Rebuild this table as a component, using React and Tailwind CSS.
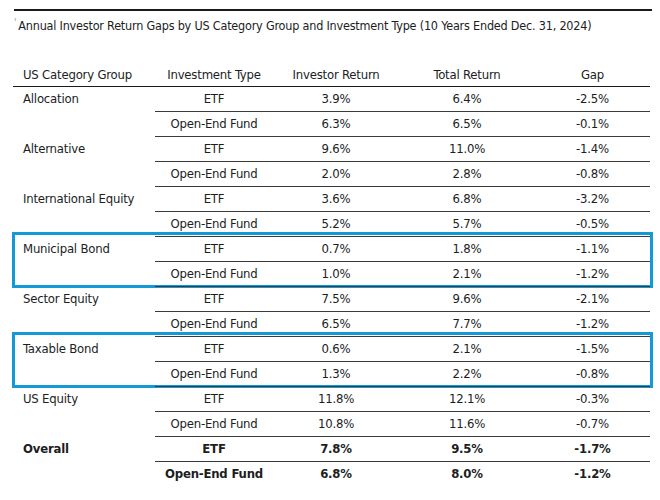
import React from 'react'

const groups = [
    { name: 'Allocation', rows: [['ETF', '3.9%', '6.4%', '-2.5%'], ['Open-End Fund', '6.3%', '6.5%', '-0.1%']] },
    { name: 'Alternative', rows: [['ETF', '9.6%', '11.0%', '-1.4%'], ['Open-End Fund', '2.0%', '2.8%', '-0.8%']] },
    { name: 'International Equity', rows: [['ETF', '3.6%', '6.8%', '-3.2%'], ['Open-End Fund', '5.2%', '5.7%', '-0.5%']] },
    { name: 'Municipal Bond', boxed: true, rows: [['ETF', '0.7%', '1.8%', '-1.1%'], ['Open-End Fund', '1.0%', '2.1%', '-1.2%']] },
    { name: 'Sector Equity', rows: [['ETF', '7.5%', '9.6%', '-2.1%'], ['Open-End Fund', '6.5%', '7.7%', '-1.2%']] },
    { name: 'Taxable Bond', boxed: true, rows: [['ETF', '0.6%', '2.1%', '-1.5%'], ['Open-End Fund', '1.3%', '2.2%', '-0.8%']] },
    { name: 'US Equity', rows: [['ETF', '11.8%', '12.1%', '-0.3%'], ['Open-End Fund', '10.8%', '11.6%', '-0.7%']] },
    { name: 'Overall', bold: true, rows: [['ETF', '7.8%', '9.5%', '-1.7%'], ['Open-End Fund', '6.8%', '8.0%', '-1.2%']] },
]

const Row = ({ label, cells, first, bold }) => {
    return (
        <div className={`flex ${first ? 'h-[24px]' : 'h-[25px]'} ${bold ? 'font-bold' : ''}`}>
            <div className={`w-[142px] pl-[10px] leading-[24px] whitespace-nowrap ${first ? '' : 'pt-px'}`}>{label}</div>
            <div className={`flex-1 grid grid-cols-[118px_126px_136px_115px] text-center ${first ? '' : 'border-t border-[#3a3a3a]'}`}>
                {cells.map((c, i) => (
                    <div key={i} className="leading-[24px] whitespace-nowrap">{c}</div>
                ))}
            </div>
        </div>
    )
}

const App = () => {
    let rowIndex = 0
    return (
        <div className="w-[660px] h-[500px] bg-white text-[#201d1e] text-[13px] tracking-[-0.2px] pt-[9px]" style={{ fontFamily: '"DejaVu Sans Condensed", "Liberation Sans", sans-serif' }}>
            <div className="ml-[14px] w-[638px] h-[2px] bg-[#1a1a1a]"></div>
            <div className="mt-[5px] ml-[14px] leading-[20px] text-[12.5px] flex items-start whitespace-nowrap">
                <span className="text-[10px] leading-[14px] text-[#9a9a9a] mr-[2px]">'</span>
                <span>Annual Investor Return Gaps by US Category Group and Investment Type (10 Years Ended Dec. 31, 2024)</span>
            </div>

            <div className="ml-[13px] w-[637px] mt-[27px]">
                {/* cabecera */}
                <div className="flex h-[24px] border-b border-[#1a1a1a]">
                    <div className="w-[142px] pl-[10px] leading-[23px] whitespace-nowrap">US Category Group</div>
                    <div className="flex-1 grid grid-cols-[118px_126px_136px_115px] text-center leading-[23px] whitespace-nowrap">
                        <div>Investment Type</div>
                        <div>Investor Return</div>
                        <div>Total Return</div>
                        <div>Gap</div>
                    </div>
                </div>

                {groups.map((g) => {
                    const rows = g.rows.map((r, i) => {
                        const first = rowIndex === 0
                        rowIndex++
                        return <Row key={i} label={i === 0 ? g.name : ''} cells={r} first={first} bold={g.bold} />
                    })
                    return (
                        <div key={g.name} className="relative">
                            {rows}
                            {/* recuadro azul */}
                            {g.boxed && (
                                <div className="absolute -top-[4px] -bottom-[2px] -left-[1px] -right-[3px] border-[3px] border-[#1499d8] pointer-events-none"></div>
                            )}
                        </div>
                    )
                })}
            </div>
        </div>
    )
}

export default App
